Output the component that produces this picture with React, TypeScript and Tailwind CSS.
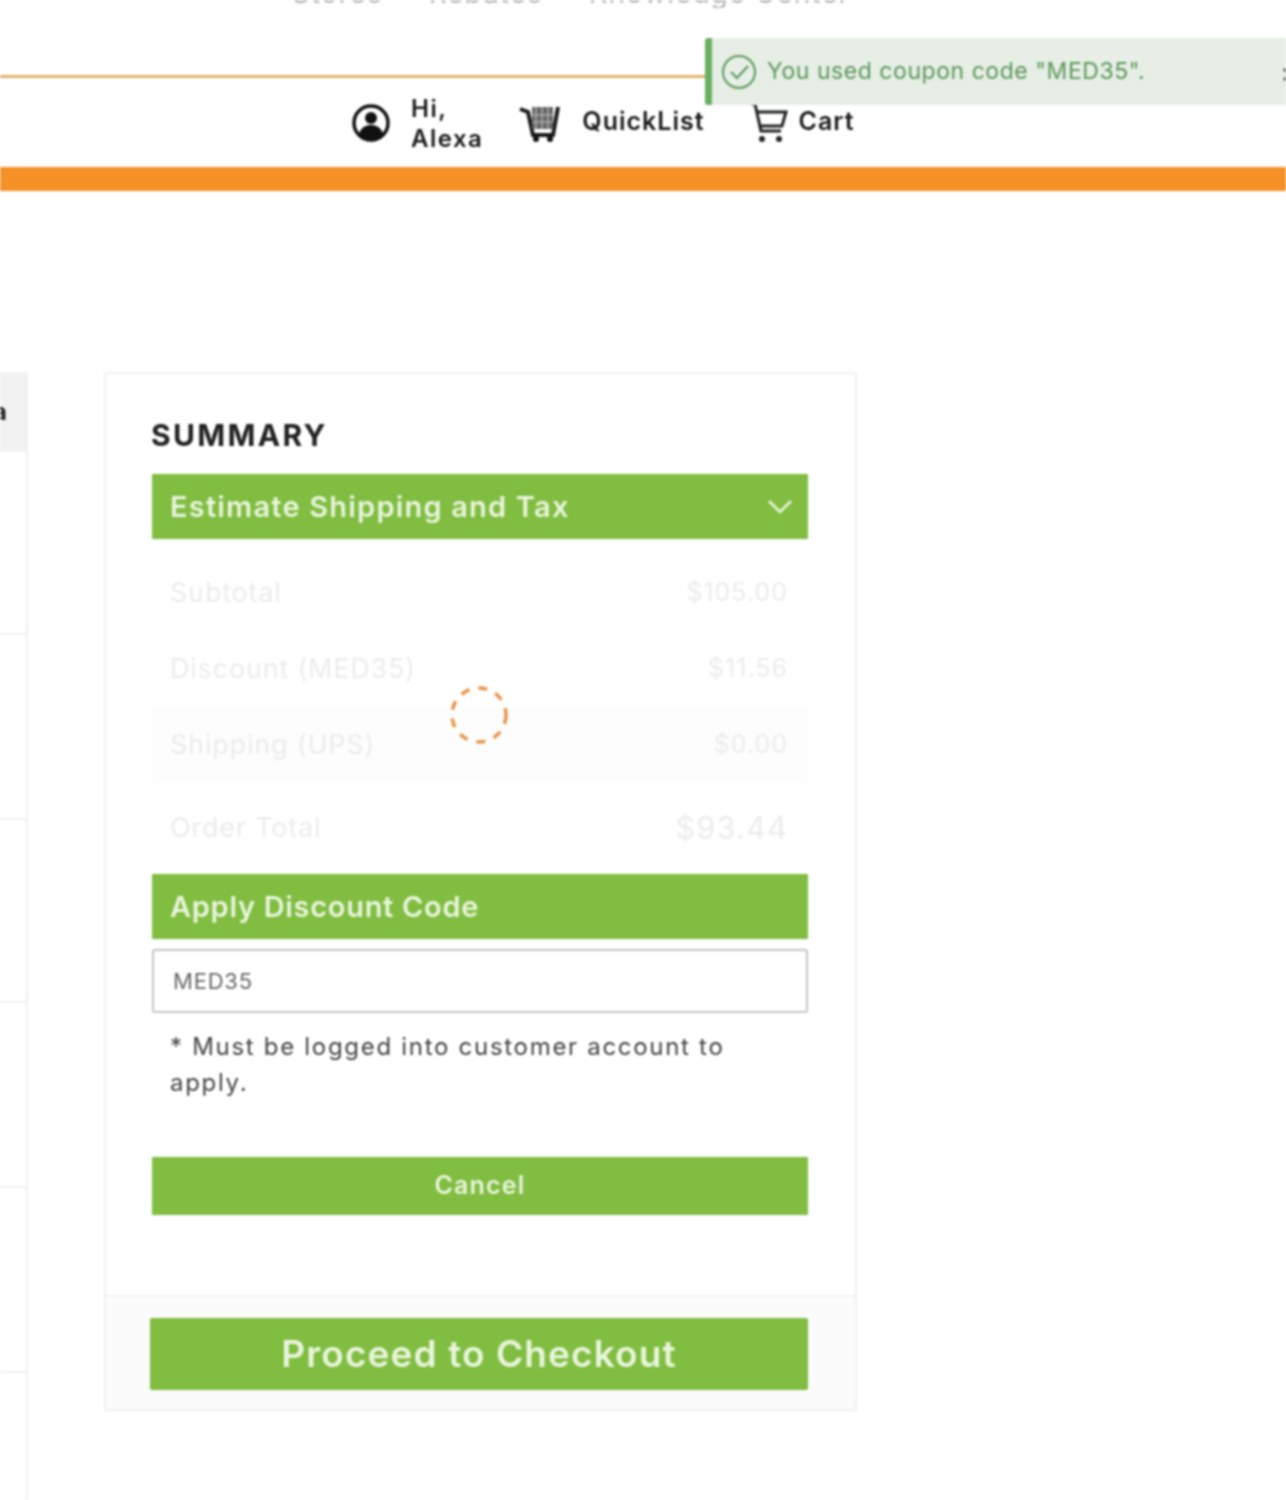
import React from 'react';

const rows = [
  { label: 'Subtotal', value: '$105.00', h: 'h-[76px]', cls: 'text-[25px] tracking-[1px]', bg: '' },
  { label: 'Discount (MED35)', value: '$11.56', h: 'h-[76px]', cls: 'text-[25px] tracking-[1px]', bg: '' },
  { label: 'Shipping (UPS)', value: '$0.00', h: 'h-[76px]', cls: 'text-[25px] tracking-[1px]', bg: 'bg-[#fdfdfd]' },
  { label: 'Order Total', value: '$93.44', h: 'h-[91px]', cls: 'text-[31px] tracking-[1px]', bg: '' },
];

const UserIcon = () => (
  <svg width="40" height="40" viewBox="0 0 40 40" fill="none">
    <circle cx="20" cy="20" r="17" stroke="#111" strokeWidth="3.5" />
    <circle cx="20" cy="15" r="6" fill="#111" />
    <path d="M8 31c2-7 7-9 12-9s10 2 12 9c-3 4-8 6-12 6s-9-2-12-6z" fill="#111" />
  </svg>
);

const QuickCartIcon = () => (
  <svg width="46" height="40" viewBox="0 0 46 40" fill="none">
    <path d="M2 6l8 3 5 23h20l5-28" stroke="#1a1a1a" strokeWidth="4" />
    <rect x="14" y="4" width="21" height="22" fill="#666" />
    <path d="M18 4v22M24 4v22M30 4v22M14 12h21M14 19h21" stroke="#aaa" strokeWidth="1.5" />
    <circle cx="18" cy="36" r="3" fill="#111" />
    <circle cx="32" cy="36" r="3" fill="#111" />
  </svg>
);

const CartIcon = () => (
  <svg width="40" height="42" viewBox="0 0 40 42" fill="none">
    <path d="M2 2h4l6 27h20M8 10h29l-4 14H11" stroke="#222" strokeWidth="3" />
    <circle cx="13" cy="37" r="3" fill="#222" />
    <circle cx="30" cy="37" r="3" fill="#222" />
  </svg>
);

const App = () => {
  return (
    <div className="relative h-[1500px] w-[1286px] overflow-hidden bg-white font-['Inter',sans-serif] text-[#222] [filter:blur(1px)]">
      {/* top nav, cut off by the crop */}
      <div className="flex h-[8px] items-end justify-end gap-[46px] overflow-hidden pr-[436px] text-[28px] leading-[30px] tracking-[1px] text-[#b5b5b5]">
        <span className="whitespace-nowrap">Stores</span>
        <span className="whitespace-nowrap">Rebates</span>
        <span className="whitespace-nowrap">Knowledge Center</span>
      </div>

      <div className="mt-[67px] h-[3px] bg-[#e2b470]" />

      <div className="flex h-[89px] items-center pl-[351px] font-semibold">
        <UserIcon />
        <div className="ml-[20px] pt-[2px] text-[24px] leading-[30px] tracking-[1.5px] text-[#1a1a1a]">
          Hi,
          <br />
          Alexa
        </div>
        <div className="ml-[35px]"><QuickCartIcon /></div>
        <span className="ml-[18px] text-[25px] tracking-[1px] text-[#1a1a1a] -translate-y-[1px]">QuickList</span>
        <div className="ml-[44px]"><CartIcon /></div>
        <span className="ml-[10px] text-[25px] tracking-[1px] text-[#1a1a1a] -translate-y-[1px]">Cart</span>
      </div>

      <div className="h-[24px] bg-[#f59126]" />

      <div className="mt-[181px] flex items-start">
        <div className="h-[1128px] w-[28px] border-r-2 border-[#f0f0f0]">
          <div className="flex h-[80px] items-center bg-[#f2f2f2] text-[24px] font-bold">
            <span className="-ml-[7px]">a</span>
          </div>
          <div className="h-[183px] border-b-2 border-[#f0f0f0]" />
          <div className="h-[185px] border-b-2 border-[#f0f0f0]" />
          <div className="h-[183px] border-b-2 border-[#f0f0f0]" />
          <div className="h-[185px] border-b-2 border-[#f0f0f0]" />
          <div className="h-[185px] border-b-2 border-[#f0f0f0]" />
        </div>

        <div className="relative ml-[76px] w-[753px] border-2 border-[#f1f1f1]">
          <div className="pl-[46px] pr-[47px]">
            <h2 className="mt-[41px] -ml-[1px] text-[30px] leading-[40px] tracking-[2.3px] font-bold text-[#222]">SUMMARY</h2>
            <div className="mt-[19px] flex h-[65px] items-center justify-between bg-[#80bd41] pl-[18px] pr-[15px] text-[29px] font-semibold tracking-[1.2px] text-[#e9f5dc]">
              <span>Estimate Shipping and Tax</span>
              <svg width="26" height="16" viewBox="0 0 26 16" fill="none">
                <path d="M2 2l11 11L24 2" stroke="#e9f5dc" strokeWidth="2.5" />
              </svg>
            </div>

            <div className="pt-[16px] text-[#ececec]">
              {rows.map((r) => (
                <div key={r.label} className={`flex items-center justify-between pl-[18px] pr-[20px] ${r.h} ${r.bg}`}>
                  <span className="text-[27px] tracking-[0.8px]">{r.label}</span>
                  <span className={r.cls}>{r.value}</span>
                </div>
              ))}
            </div>

            <div className="flex h-[65px] items-center bg-[#80bd41] pl-[18px] text-[29px] font-semibold tracking-[0.7px] text-[#e9f5dc]">
              Apply Discount Code
            </div>
            <div className="mt-[10px] flex h-[64px] items-center rounded-[3px] border-2 border-[#c4c4c4] pl-[19px] text-[22px] tracking-[0.8px] text-[#666]">
              MED35
            </div>
            <p className="mt-[16px] pl-[18px] pr-[60px] text-[24px] leading-[36px] tracking-[1.7px] text-[#444]">
              * Must be logged into customer account to apply.
            </p>
            <div className="mt-[56px] flex h-[58px] items-center justify-center bg-[#80bd41] text-[25px] font-semibold tracking-[1.2px] text-[#e9f5dc]">
              Cancel
            </div>
          </div>

          <div className="mt-[80px] border-t-2 border-[#f3f3f3] bg-[#fbfbfb] pb-[19px] pl-[44px] pr-[47px] pt-[21px]">
            <div className="flex h-[72px] items-center justify-center rounded-[2px] bg-[#80bd41] text-[37px] font-semibold tracking-[1.1px] text-[#e9f5dc]">
              Proceed to Checkout
            </div>
          </div>

          {/* loading spinner over the totals */}
          <svg className="absolute left-[343px] top-[311px]" width="60" height="60" viewBox="0 0 60 60" fill="none">
            <circle cx="30" cy="30" r="27" stroke="#e8954a" strokeWidth="3.5" strokeDasharray="9 9" />
          </svg>
        </div>
      </div>

      {/* coupon toast */}
      <div className="absolute left-[705px] top-[38px] flex h-[67px] w-[600px] items-center rounded-l-[3px] border-l-[7px] border-[#66b060] bg-[#e6eee5] pl-[9px] text-[#5b975a]">
        <svg width="36" height="36" viewBox="0 0 36 36" fill="none">
          <circle cx="18" cy="18" r="16" stroke="#5b975a" strokeWidth="2" />
          <path d="M10 18l6 6 11-12" stroke="#5b975a" strokeWidth="2" />
        </svg>
        <span className="ml-[10px] text-[23px] tracking-[0.55px]">You used coupon code "MED35".</span>
        <span className="absolute left-[568px] text-[28px] text-[#555]">×</span>
      </div>
    </div>
  );
};

export default App;
